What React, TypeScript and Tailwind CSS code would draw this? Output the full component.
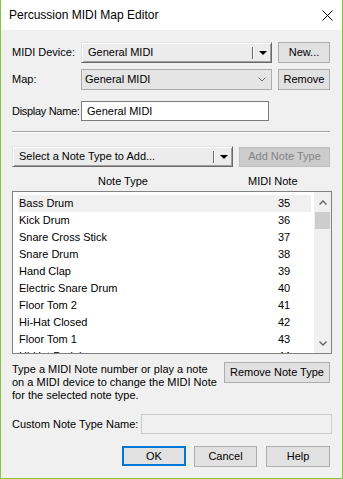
import React from 'react';

const notes: [string, number][] = [
  ['Bass Drum', 35],
  ['Kick Drum', 36],
  ['Snare Cross Stick', 37],
  ['Snare Drum', 38],
  ['Hand Clap', 39],
  ['Electric Snare Drum', 40],
  ['Floor Tom 2', 41],
  ['Hi-Hat Closed', 42],
  ['Floor Tom 1', 43],
  ['Hi-Hat Pedal', 44],
];

function Triangle() {
  return (
    <svg width="8" height="4" viewBox="0 0 8 4">
      <path d="M0 0H8L4 4Z" fill="#000" />
    </svg>
  );
}

function Chevron({ up = false, color = '#606060', width = 1.3 }: { up?: boolean; color?: string; width?: number }) {
  return (
    <svg width="8" height="5" viewBox="0 0 8 5">
      <polyline
        points={up ? '0.5,4.5 4,1 7.5,4.5' : '0.5,0.5 4,4 7.5,0.5'}
        fill="none"
        stroke={color}
        strokeWidth={width}
      />
    </svg>
  );
}

// old style 3D drop-down (MIDI Device / note type picker)
function DropCombo({ text, className }: { text: string; className: string }) {
  return (
    <div
      className={`flex items-center h-[21px] bg-[#ececec] border border-t-[#e3e3e3] border-l-[#e3e3e3] border-r-[#696969] border-b-[#696969] shadow-[inset_1px_1px_0_#ffffff,inset_-1px_-1px_0_#a0a0a0] ${className}`}
    >
      <span className="flex-1 pl-[6px] whitespace-nowrap">{text}</span>
      <div className="w-px h-[12px] bg-[#696969]" />
      <div className="w-px h-[12px] bg-white" />
      <div className="w-[17px] flex justify-center">
        <Triangle />
      </div>
    </div>
  );
}

function Button({ children, className = '' }: { children: React.ReactNode; className?: string }) {
  return (
    <button className={`h-[21px] bg-[#e1e1e1] border border-[#adadad] text-[11px] leading-none text-black ${className}`}>
      {children}
    </button>
  );
}

export default function App() {
  return (
    <div className="w-[343px] h-[479px] bg-[#f0f0f0] border-l border-r border-b border-[#86c440] flex flex-col font-['Liberation_Sans',Arial,sans-serif] text-[11px] text-black">
      {/* title bar */}
      <div className="h-[30px] bg-white flex items-center justify-between pl-[8px] pr-[9px]">
        <span className="text-[12px]">Percussion MIDI Map Editor</span>
        <svg width="11" height="11" viewBox="0 0 11 11">
          <path d="M0.5 0.5L10.5 10.5M10.5 0.5L0.5 10.5" stroke="#000" strokeWidth="1" />
        </svg>
      </div>

      <div className="flex flex-col pt-[12px] pl-[11px] pr-[12px]">
        <div className="flex items-center h-[21px]">
          <span className="w-[69px] shrink-0">MIDI Device:</span>
          <DropCombo text="General MIDI" className="w-[191px]" />
          <Button className="ml-[6px] flex-1">New...</Button>
        </div>

        <div className="flex items-center h-[21px] mt-[6px]">
          <span className="w-[69px] shrink-0">Map:</span>
          <div className="w-[191px] h-[21px] flex items-center bg-[#e5e5e5] border border-[#acacac]">
            <span className="flex-1 pl-[3px]">General MIDI</span>
            <div className="pr-[5px] flex items-center">
              <Chevron color="#707070" width={1} />
            </div>
          </div>
          <Button className="ml-[6px] flex-1">Remove</Button>
        </div>

        <div className="flex items-center h-[20px] mt-[11px]">
          <span className="w-[69px] shrink-0 whitespace-nowrap tracking-[-0.3px]">Display Name:</span>
          <div className="w-[188px] h-[20px] flex items-center bg-white border border-[#7a7a7a] pl-[5px]">
            General MIDI
          </div>
        </div>

        <div className="mt-[10px] border-t border-t-[#a0a0a0] border-b border-b-white" />

        <div className="flex items-center h-[21px] mt-[13px]">
          <DropCombo text="Select a Note Type to Add..." className="w-[221px]" />
          <button className="ml-[6px] flex-1 h-[20px] bg-[#cccccc] border border-[#bfbfbf] text-[#838383] text-[11px] leading-none">
            Add Note Type
          </button>
        </div>

        <div className="flex h-[14px] leading-[14px] mt-[7px]">
          <span className="w-[222px] text-center">Note Type</span>
          <span className="ml-[14px]">MIDI Note</span>
        </div>

        <div className="mt-[3px] -mr-[2px] h-[163px] border border-[#828282] bg-white flex overflow-hidden">
          <div className="flex-1 pl-[5px] pr-[3px] pt-[3px] overflow-hidden">
            {notes.map(([name, num], i) => (
              <div key={name} className={`flex h-[17px] leading-[17px] ${i === 0 ? 'bg-[#f0f0f0]' : ''}`}>
                <span className="w-[260px] pl-[1px]">{name}</span>
                <span>{num}</span>
              </div>
            ))}
          </div>
          <div className="w-[17px] bg-[#f0f0f0] flex flex-col">
            <div className="h-[20px] flex items-center justify-center">
              <Chevron up />
            </div>
            <div className="h-[17px] mx-[1px] bg-[#cdcdcd]" />
            <div className="flex-1" />
            <div className="h-[20px] flex items-center justify-center">
              <Chevron />
            </div>
          </div>
        </div>

        <div className="flex items-start justify-between mt-[8px]">
          <p className="pt-[1px] leading-[13px]">
            Type a MIDI Note number or play a note
            <br />
            on a MIDI device to change the MIDI Note
            <br />
            for the selected note type.
          </p>
          <Button className="w-[106px]">Remove Note Type</Button>
        </div>

        <div className="flex items-center h-[20px] mt-[12px]">
          <span className="w-[129px] shrink-0 whitespace-nowrap">Custom Note Type Name:</span>
          <div className="flex-1 -mr-[2px] h-[20px] bg-[#f0f0f0] border border-[#cccccc]" />
        </div>

        <div className="flex justify-end mt-[12px]">
          <button className="w-[64px] h-[20px] bg-[#e1e1e1] border-2 border-[#0078d7] text-[11px] leading-none">OK</button>
          <Button className="ml-[8px] w-[63px] h-[20px]">Cancel</Button>
          <Button className="ml-[9px] w-[64px] h-[20px]">Help</Button>
        </div>
      </div>
    </div>
  );
}
